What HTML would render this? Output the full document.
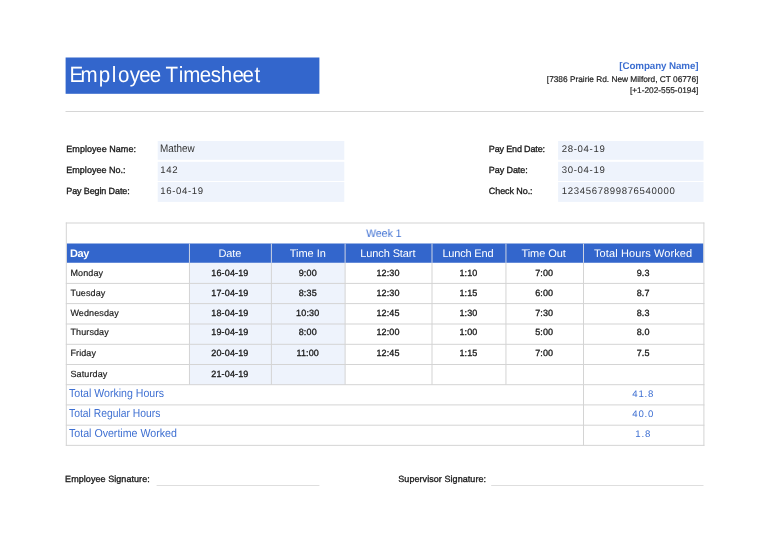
<!DOCTYPE html>
<html lang="en">
<head>
<meta charset="utf-8">
<title>Employee Timesheet</title>
<style>
html,body{margin:0;padding:0;background:#fff;}
body{width:768px;height:544px;position:relative;overflow:hidden;font-family:"Liberation Sans",sans-serif;color:#111;text-rendering:geometricPrecision;}
.page{position:absolute;left:0;top:0;width:768px;height:544px;will-change:transform;}
.a{position:absolute;white-space:nowrap;}
.co{right:69.6px;text-align:right;}
.co1{top:61.2px;font-size:9.8px;line-height:12px;font-weight:bold;color:#3d6fd1;letter-spacing:-0.1px;right:69.5px;}
.co2{top:73.5px;font-size:8.3px;line-height:11px;color:#222;-webkit-text-stroke:0.2px #222;}
.co3{top:84.7px;font-size:8.3px;line-height:11px;color:#222;-webkit-text-stroke:0.2px #222;}
.lbl{font-size:9px;line-height:12px;color:#1a1a1a;-webkit-text-stroke:0.32px #1a1a1a;}
.val{font-size:9.6px;line-height:12px;color:#333;letter-spacing:0.65px;}
.hc{color:#fff;font-size:11px;line-height:14px;text-align:center;}
.c{font-size:9px;letter-spacing:0.15px;line-height:12px;color:#1a1a1a;text-align:center;-webkit-text-stroke:0.32px #1a1a1a;}
.d{font-size:9px;letter-spacing:0.12px;line-height:12px;color:#1a1a1a;-webkit-text-stroke:0.18px #1a1a1a;}
.t{font-size:11.6px;line-height:14px;color:#3f70d2;transform:scaleX(0.9);transform-origin:0 0;}
.tn{font-size:9.6px;line-height:14px;color:#3f70d2;letter-spacing:0.8px;text-align:center;}
.wk{font-size:11px;line-height:14px;color:#3f70d2;text-align:center;transform:scaleX(0.953);}
</style>
</head>
<body>
<div class="page">
<svg class="a" style="left:0;top:0" width="768" height="544" viewBox="0 0 768 544">
<rect x="65.60" y="57.50" width="253.80" height="36.30" fill="#3366cc"/>
<text transform="scale(0.933,1)" x="74.55 86.33 105.96 119.74 126.57 139.03 149.21 160.52 172.03 177.42 191.72 196.30 214.21 225.83 236.55 249.26 259.98 272.80" y="81.85" font-family="'Liberation Sans',sans-serif" font-size="22" fill="#fff">Employee Timesheet</text>
<rect x="65.50" y="111.00" width="638.10" height="1.00" fill="#d6d6d6"/>
<rect x="157.70" y="141.00" width="186.60" height="18.80" fill="#eef3fc"/>
<rect x="558.10" y="141.00" width="145.40" height="18.80" fill="#eef3fc"/>
<rect x="157.70" y="161.80" width="186.60" height="19.20" fill="#eef3fc"/>
<rect x="558.10" y="161.80" width="145.40" height="19.20" fill="#eef3fc"/>
<rect x="157.70" y="182.00" width="186.60" height="19.90" fill="#eef3fc"/>
<rect x="558.10" y="182.00" width="145.40" height="19.90" fill="#eef3fc"/>
<rect x="189.45" y="262.75" width="155.65" height="121.95" fill="#eef3fc"/>
<rect x="66.80" y="243.50" width="636.60" height="19.25" fill="#3366cc"/>
<rect x="65.80" y="222.50" width="638.60" height="1.00" fill="#d4d4d4"/>
<rect x="65.80" y="282.90" width="638.60" height="1.00" fill="#d4d4d4"/>
<rect x="65.80" y="303.10" width="638.60" height="1.00" fill="#d4d4d4"/>
<rect x="65.80" y="323.50" width="638.60" height="1.00" fill="#d4d4d4"/>
<rect x="65.80" y="343.80" width="638.60" height="1.00" fill="#d4d4d4"/>
<rect x="65.80" y="364.00" width="638.60" height="1.00" fill="#d4d4d4"/>
<rect x="65.80" y="384.20" width="638.60" height="1.00" fill="#d4d4d4"/>
<rect x="65.80" y="404.40" width="638.60" height="1.00" fill="#d4d4d4"/>
<rect x="65.80" y="424.70" width="638.60" height="1.00" fill="#d4d4d4"/>
<rect x="65.80" y="444.85" width="638.60" height="1.00" fill="#d4d4d4"/>
<rect x="65.80" y="222.50" width="1.00" height="223.35" fill="#d4d4d4"/>
<rect x="703.40" y="222.50" width="1.00" height="223.35" fill="#d4d4d4"/>
<rect x="188.95" y="262.75" width="1.00" height="121.95" fill="#d4d4d4"/>
<rect x="188.95" y="243.50" width="1.00" height="19.25" fill="#cdd3e3"/>
<rect x="270.90" y="262.75" width="1.00" height="121.95" fill="#d4d4d4"/>
<rect x="270.90" y="243.50" width="1.00" height="19.25" fill="#cdd3e3"/>
<rect x="344.60" y="262.75" width="1.00" height="121.95" fill="#d4d4d4"/>
<rect x="344.60" y="243.50" width="1.00" height="19.25" fill="#cdd3e3"/>
<rect x="431.50" y="262.75" width="1.00" height="121.95" fill="#d4d4d4"/>
<rect x="431.50" y="243.50" width="1.00" height="19.25" fill="#cdd3e3"/>
<rect x="505.45" y="262.75" width="1.00" height="121.95" fill="#d4d4d4"/>
<rect x="505.45" y="243.50" width="1.00" height="19.25" fill="#cdd3e3"/>
<rect x="583.00" y="262.75" width="1.00" height="121.95" fill="#d4d4d4"/>
<rect x="583.00" y="243.50" width="1.00" height="19.25" fill="#cdd3e3"/>
<rect x="583.00" y="384.70" width="1.00" height="60.65" fill="#d4d4d4"/>
<rect x="156.60" y="485.00" width="162.80" height="1.00" fill="#dedede"/>
<rect x="491.20" y="485.00" width="212.30" height="1.00" fill="#dedede"/>
</svg>
<div class="a co co1">[Company Name]</div>
<div class="a co co2">[7386 Prairie Rd. New Milford, CT 06776]</div>
<div class="a co co3">[+1-202-555-0194]</div>
<div class="a lbl" style="left:66.30px;top:143.15px;letter-spacing:0.05px;">Employee Name:</div>
<div class="a val" style="left:160.20px;top:142.55px;letter-spacing:0;font-size:11px;transform:scaleX(0.9);transform-origin:0 0;">Mathew</div>
<div class="a lbl" style="left:488.80px;top:143.15px;letter-spacing:-0.15px;">Pay End Date:</div>
<div class="a val" style="left:561.80px;top:143.95px;">28-04-19</div>
<div class="a lbl" style="left:66.30px;top:164.20px;letter-spacing:0.02px;">Employee No.:</div>
<div class="a val" style="left:160.20px;top:165.00px;">142</div>
<div class="a lbl" style="left:488.80px;top:164.20px;letter-spacing:-0.08px;">Pay Date:</div>
<div class="a val" style="left:561.80px;top:165.00px;">30-04-19</div>
<div class="a lbl" style="left:66.30px;top:185.10px;letter-spacing:-0.12px;">Pay Begin Date:</div>
<div class="a val" style="left:160.20px;top:185.90px;">16-04-19</div>
<div class="a lbl" style="left:488.80px;top:185.10px;letter-spacing:-0.08px;">Check No.:</div>
<div class="a val" style="left:561.80px;top:185.90px;">1234567899876540000</div>
<div class="a wk" style="left:64.60px;top:226.60px;width:637.60px;">Week 1</div>
<div class="a hc" style="left:70.00px;top:246.80px;font-weight:bold;text-align:left;letter-spacing:-0.4px;">Day</div>
<div class="a hc" style="left:169.90px;top:246.80px;width:120.00px;letter-spacing:-0.1px;">Date</div>
<div class="a hc" style="left:247.85px;top:246.80px;width:120.00px;letter-spacing:0px;">Time In</div>
<div class="a hc" style="left:327.80px;top:246.80px;width:120.00px;letter-spacing:-0.1px;">Lunch Start</div>
<div class="a hc" style="left:407.90px;top:246.80px;width:120.00px;letter-spacing:-0.18px;">Lunch End</div>
<div class="a hc" style="left:483.60px;top:246.80px;width:120.00px;letter-spacing:-0.08px;">Time Out</div>
<div class="a hc" style="left:583.15px;top:246.80px;width:120.00px;letter-spacing:0.11px;">Total Hours Worked</div>
<div class="a d" style="left:70.40px;top:266.68px;">Monday</div>
<div class="a c" style="left:188.95px;top:266.68px;width:81.95px;">16-04-19</div>
<div class="a c" style="left:270.90px;top:266.68px;width:73.70px;">9:00</div>
<div class="a c" style="left:344.60px;top:266.68px;width:86.90px;">12:30</div>
<div class="a c" style="left:431.50px;top:266.68px;width:73.95px;">1:10</div>
<div class="a c" style="left:505.45px;top:266.68px;width:77.55px;">7:00</div>
<div class="a c" style="left:583.00px;top:266.68px;width:120.40px;">9.3</div>
<div class="a d" style="left:70.40px;top:287.10px;">Tuesday</div>
<div class="a c" style="left:188.95px;top:287.10px;width:81.95px;">17-04-19</div>
<div class="a c" style="left:270.90px;top:287.10px;width:73.70px;">8:35</div>
<div class="a c" style="left:344.60px;top:287.10px;width:86.90px;">12:30</div>
<div class="a c" style="left:431.50px;top:287.10px;width:73.95px;">1:15</div>
<div class="a c" style="left:505.45px;top:287.10px;width:77.55px;">6:00</div>
<div class="a c" style="left:583.00px;top:287.10px;width:120.40px;">8.7</div>
<div class="a d" style="left:70.40px;top:307.40px;">Wednesday</div>
<div class="a c" style="left:188.95px;top:307.40px;width:81.95px;">18-04-19</div>
<div class="a c" style="left:270.90px;top:307.40px;width:73.70px;">10:30</div>
<div class="a c" style="left:344.60px;top:307.40px;width:86.90px;">12:45</div>
<div class="a c" style="left:431.50px;top:307.40px;width:73.95px;">1:30</div>
<div class="a c" style="left:505.45px;top:307.40px;width:77.55px;">7:30</div>
<div class="a c" style="left:583.00px;top:307.40px;width:120.40px;">8.3</div>
<div class="a d" style="left:70.40px;top:326.15px;">Thursday</div>
<div class="a c" style="left:188.95px;top:326.15px;width:81.95px;">19-04-19</div>
<div class="a c" style="left:270.90px;top:326.15px;width:73.70px;">8:00</div>
<div class="a c" style="left:344.60px;top:326.15px;width:86.90px;">12:00</div>
<div class="a c" style="left:431.50px;top:326.15px;width:73.95px;">1:00</div>
<div class="a c" style="left:505.45px;top:326.15px;width:77.55px;">5:00</div>
<div class="a c" style="left:583.00px;top:326.15px;width:120.40px;">8.0</div>
<div class="a d" style="left:70.40px;top:347.20px;">Friday</div>
<div class="a c" style="left:188.95px;top:347.20px;width:81.95px;">20-04-19</div>
<div class="a c" style="left:270.90px;top:347.20px;width:73.70px;">11:00</div>
<div class="a c" style="left:344.60px;top:347.20px;width:86.90px;">12:45</div>
<div class="a c" style="left:431.50px;top:347.20px;width:73.95px;">1:15</div>
<div class="a c" style="left:505.45px;top:347.20px;width:77.55px;">7:00</div>
<div class="a c" style="left:583.00px;top:347.20px;width:120.40px;">7.5</div>
<div class="a d" style="left:70.40px;top:368.20px;">Saturday</div>
<div class="a c" style="left:188.95px;top:368.20px;width:81.95px;">21-04-19</div>
<div class="a t" style="left:69.40px;top:386.80px;transform:scaleX(0.912);">Total Working Hours</div>
<div class="a tn" style="left:583.00px;top:388.20px;width:120.40px;">41.8</div>
<div class="a t" style="left:69.40px;top:406.95px;transform:scaleX(0.892);">Total Regular Hours</div>
<div class="a tn" style="left:583.00px;top:407.65px;width:120.40px;">40.0</div>
<div class="a t" style="left:69.40px;top:427.37px;transform:scaleX(0.916);">Total Overtime Worked</div>
<div class="a tn" style="left:583.00px;top:428.38px;width:120.40px;">1.8</div>
<div class="a lbl" style="left:65.10px;top:473.30px;letter-spacing:0.06px;">Employee Signature:</div>
<div class="a lbl" style="left:398.30px;top:473.30px;letter-spacing:0.06px;">Supervisor Signature:</div>
</div>
</body>
</html>
